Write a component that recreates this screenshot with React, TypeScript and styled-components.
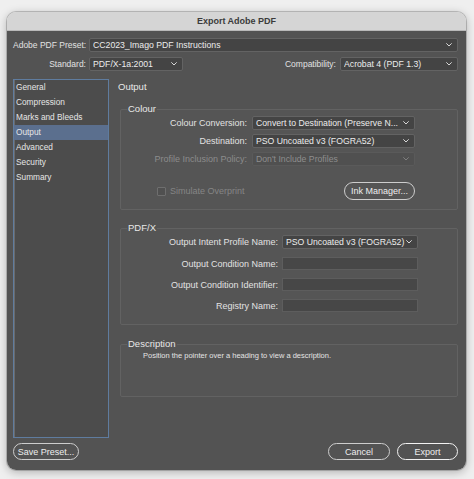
import {FC, ReactNode} from 'react';
import styled, {createGlobalStyle} from 'styled-components';

const GlobalStyle = createGlobalStyle`
  html, body {
    margin: 0;
    padding: 0;
    background: #efefef;
  }
  body {
    font-family: "Liberation Sans", Arial, sans-serif;
    -webkit-font-smoothing: antialiased;
  }
`;

const Stage = styled.div`
  width: 474px;
  height: 479px;
  padding: 12px 8px 9px 7px;
  box-sizing: border-box;
`;

const Window = styled.div`
  width: 459px;
  height: 458px;
  border-radius: 9px;
  overflow: hidden;
  display: flex;
  flex-direction: column;
  box-shadow: 0 2px 10px rgba(0, 0, 0, 0.28), 0 0 0 1px rgba(0, 0, 0, 0.18);
`;

const TitleBar = styled.div`
  height: 18px;
  flex: none;
  background: #d5d5d5;
  border-bottom: 1px solid #b9b9b9;
  display: flex;
  align-items: center;
  justify-content: center;
  font-size: 9px;
  font-weight: bold;
  color: #3b3b3b;
`;

const Body = styled.div`
  flex: 1;
  min-height: 0;
  background: #535353;
  padding: 7px 8px 8px 6px;
  display: flex;
  flex-direction: column;
  color: #e4e4e4;
  font-size: 9px;
`;

const TopGrid = styled.div`
  display: grid;
  grid-template-columns: 73px 1fr;
  column-gap: 3px;
  row-gap: 5px;
  align-items: center;
`;

const Label = styled.span<{ $dim?: boolean; $small?: boolean }>`
  text-align: right;
  white-space: nowrap;
  font-size: ${p => (p.$small ? '8.5px' : 'inherit')};
  color: ${p => (p.$dim ? '#8c8c8c' : '#e2e2e2')};
`;

const InlineRow = styled.div`
  display: flex;
  align-items: center;
  gap: 4px;
`;

const Spacer = styled.div`
  flex: 1;
`;

const SelectBox = styled.div<{ $w?: number; $dim?: boolean }>`
  height: 14px;
  box-sizing: border-box;
  width: ${p => (p.$w ? `${p.$w}px` : '100%')};
  background: ${p => (p.$dim ? '#505050' : '#444444')};
  border: 1px solid ${p => (p.$dim ? '#5a5a5a' : '#636363')};
  border-radius: 2px;
  display: flex;
  align-items: center;
  padding: 0 5px 0 3px;
  font-size: 8.7px;
  color: ${p => (p.$dim ? '#8e8e8e' : '#ececec')};
  span {
    flex: 1;
    overflow: hidden;
    white-space: nowrap;
  }
  svg {
    flex: none;
  }
`;

const InputBox = styled.div`
  height: 13px;
  box-sizing: border-box;
  background: #474747;
  border: 1px solid #5d5d5d;
`;

const Chevron: FC<{ dim?: boolean }> = ({dim}) => (
  <svg width="6" height="4" viewBox="0 0 6 4">
    <polyline
      points="0.6,0.6 3,3 5.4,0.6"
      fill="none"
      stroke={dim ? '#7f7f7f' : '#d8d8d8'}
      strokeWidth="1"
      strokeLinecap="round"
    />
  </svg>
);

const Select: FC<{ value: string; w?: number; dim?: boolean }> = ({value, w, dim}) => (
  <SelectBox $w={w} $dim={dim}>
    <span>{value}</span>
    <Chevron dim={dim}/>
  </SelectBox>
);

const Main = styled.div`
  margin-top: 8px;
  height: 359px;
  flex: none;
  display: flex;
  gap: 9px;
`;

const Sidebar = styled.ul`
  width: 96px;
  box-sizing: border-box;
  margin: 0;
  padding: 0;
  list-style: none;
  background: #4c4c4c;
  border: 1px solid #5f7c9f;
  box-shadow: inset 1px 0 0 #6b6b6b;
`;

const SideItem = styled.li<{ $active?: boolean }>`
  height: 15px;
  line-height: 15px;
  padding-left: 2px;
  font-size: 8.3px;
  color: #e6e6e6;
  background: ${p => (p.$active ? '#5b6f8e' : 'transparent')};
`;

const Content = styled.div`
  flex: 1;
  display: flex;
  flex-direction: column;
`;

const Heading = styled.div`
  margin-top: 1px;
  height: 14px;
  line-height: 14px;
  font-size: 9.5px;
  color: #e8e8e8;
`;

const Group = styled.fieldset<{ $mt: number; $pb: number; $h?: number }>`
  margin: ${p => p.$mt}px 0 0 2px;
  padding: 1px 0 ${p => p.$pb}px 0;
  border: 1px solid #626262;
  border-radius: 2px;
  background: #555555;
  min-width: 0;
  box-sizing: border-box;
  ${p => (p.$h ? `height: ${p.$h}px;` : '')}
`;

const Legend = styled.legend`
  margin-left: 6px;
  padding: 0 1px;
  font-size: 9.5px;
  line-height: 12px;
  color: #e8e8e8;
`;

const FormGrid = styled.div<{ $cols: string; $gap: number; $col: number }>`
  display: grid;
  grid-template-columns: ${p => p.$cols};
  column-gap: ${p => p.$col}px;
  row-gap: ${p => p.$gap}px;
  align-items: center;
`;

const CheckRow = styled.div`
  grid-column: 1 / span 2;
  margin-top: 12px;
  padding-left: 36px;
  display: flex;
  align-items: center;
  justify-content: space-between;
`;

const CheckLabel = styled.label`
  display: flex;
  align-items: center;
  gap: 4px;
  color: #858585;
`;

const CheckBox = styled.span`
  width: 7px;
  height: 7px;
  border: 1px solid #6e6e6e;
  border-radius: 1px;
  background: #505050;
`;

const Pill = styled.button<{ $w: number; $h?: number; $primary?: boolean }>`
  width: ${p => p.$w}px;
  height: ${p => p.$h ?? 17}px;
  box-sizing: border-box;
  border: ${p => (p.$primary ? '1.5px solid #f2f2f2' : '1px solid #cdcdcd')};
  border-radius: 9px;
  background: transparent;
  color: #eeeeee;
  font-family: inherit;
  font-size: 9px;
  padding: 0;
  cursor: default;
`;

const Description = styled.div`
  padding: 0 0 0 22px;
  font-size: 7.5px;
  color: #e4e4e4;
`;

const Footer = styled.div`
  margin-top: 5px;
  display: flex;
  align-items: center;
  gap: 7px;
`;

const sections = ['General', 'Compression', 'Marks and Bleeds', 'Output', 'Advanced', 'Security', 'Summary'];

const Row: FC<{ label: string; dim?: boolean; children: ReactNode }> = ({label, dim, children}) => (
  <>
    <Label $dim={dim}>{label}</Label>
    {children}
  </>
);

export default function App() {
  return (
    <>
      <GlobalStyle/>
      <Stage>
        <Window>
          <TitleBar>Export Adobe PDF</TitleBar>
          <Body>
            <TopGrid>
              <Label $small>Adobe PDF Preset:</Label>
              <Select value="CC2023_Imago PDF Instructions"/>
              <Label $small>Standard:</Label>
              <InlineRow>
                <Select value="PDF/X-1a:2001" w={94}/>
                <Spacer/>
                <Label $small>Compatibility:</Label>
                <Select value="Acrobat 4 (PDF 1.3)" w={118}/>
              </InlineRow>
            </TopGrid>

            <Main>
              <Sidebar>
                {sections.map(s => (
                  <SideItem key={s} $active={s === 'Output'}>{s}</SideItem>
                ))}
              </Sidebar>

              <Content>
                <Heading>Output</Heading>

                <Group $mt={9} $pb={9}>
                  <Legend>Colour</Legend>
                  <FormGrid $cols="126px 163px" $gap={4} $col={5}>
                    <Row label="Colour Conversion:">
                      <Select value="Convert to Destination (Preserve N..."/>
                    </Row>
                    <Row label="Destination:">
                      <Select value="PSO Uncoated v3 (FOGRA52)"/>
                    </Row>
                    <Row label="Profile Inclusion Policy:" dim>
                      <Select value="Don't Include Profiles" dim/>
                    </Row>
                    <CheckRow>
                      <CheckLabel>
                        <CheckBox/>
                        Simulate Overprint
                      </CheckLabel>
                      <Pill $w={71} $h={18}>Ink Manager...</Pill>
                    </CheckRow>
                  </FormGrid>
                </Group>

                <Group $mt={12} $pb={12}>
                  <Legend>PDF/X</Legend>
                  <FormGrid $cols="157px 136px" $gap={8} $col={4}>
                    <Row label="Output Intent Profile Name:">
                      <Select value="PSO Uncoated v3 (FOGRA52)"/>
                    </Row>
                    <Row label="Output Condition Name:">
                      <InputBox/>
                    </Row>
                    <Row label="Output Condition Identifier:">
                      <InputBox/>
                    </Row>
                    <Row label="Registry Name:">
                      <InputBox/>
                    </Row>
                  </FormGrid>
                </Group>

                <Group $mt={13} $pb={0} $h={59}>
                  <Legend>Description</Legend>
                  <Description>Position the pointer over a heading to view a description.</Description>
                </Group>
              </Content>
            </Main>

            <Footer>
              <Pill $w={66} $h={17}>Save Preset...</Pill>
              <Spacer/>
              <Pill $w={62} $h={17}>Cancel</Pill>
              <Pill $w={61} $h={17} $primary>Export</Pill>
            </Footer>
          </Body>
        </Window>
      </Stage>
    </>
  );
}
